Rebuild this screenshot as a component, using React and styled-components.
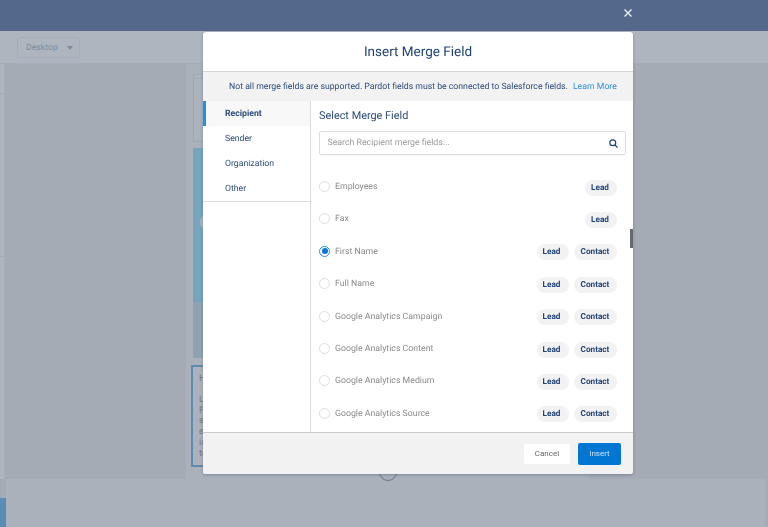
import React from "react";
import styled, { createGlobalStyle } from "styled-components";

const Global = createGlobalStyle`
  html, body { margin: 0; padding: 0; width: 768px; height: 527px; overflow: hidden; background: #a4abb5; }
  * { box-sizing: border-box; }
  body { font-family: Roboto, "Liberation Sans", sans-serif; text-rendering: geometricPrecision; }
`;

const Page = styled.div`
  position: relative;
  width: 768px;
  height: 527px;
  display: flex;
  flex-direction: column;
  overflow: hidden;
  filter: blur(0.45px);
`;
const TopBar = styled.header`
  height: 31px;
  flex: none;
  background: #53688a;
  border-bottom: 1px solid #56698a;
`;
const Toolbar = styled.div`
  height: 33px;
  flex: none;
  background: #aeb5bf;
  border-bottom: 1px solid #a6adb8;
  padding: 6px 0 0 17px;
`;
const DeviceSelect = styled.div`
  width: 63px;
  height: 21px;
  border: 1px solid #a5adb8;
  border-radius: 3px;
  display: flex;
  align-items: center;
  justify-content: space-between;
  padding: 0 6px 0 8px;
  font-size: 8.7px;
  color: #7c8ca1;
`;
const Caret = styled.span`
  width: 0;
  height: 0;
  border-left: 3.5px solid transparent;
  border-right: 3.5px solid transparent;
  border-top: 4px solid #7f8a99;
`;
const Workspace = styled.div`
  height: 415px;
  flex: none;
  display: flex;
`;
const Rail = styled.div`
  width: 5px;
  flex: none;
  background: #aeb5bf;
  border-right: 1px solid #a8afba;
  display: flex;
  flex-direction: column;
  padding-top: 29px;
`;
const RailBlock = styled.div`
  height: 164px;
  border-top: 1px solid #a2a9b4;
  border-bottom: 1px solid #a2a9b4;
`;
const Gutter = styled.div`
  width: ${(p) => p.$w};
  flex: ${(p) => (p.$grow ? 1 : "none")};
  background: #a4abb5;
`;
const CanvasColumn = styled.div`
  width: 403px;
  flex: none;
  background: #aab1bb;
  padding: 10px 0 0 7px;
  position: relative;
`;
const EmailHead = styled.div`
  height: 68px;
  border: 1px solid #a0a7b2;
  background: #acb3bd;
  padding-top: 3px;
`;
const EmailHeadLine = styled.div`
  height: 1px;
  background: #a0a7b2;
`;
const Hero = styled.div`
  position: relative;
  margin-top: 6px;
  height: 154px;
  background: #76a4bc;
`;
const HeroDot = styled.span`
  position: absolute;
  left: 7px;
  top: 64px;
  width: 20px;
  height: 20px;
  border-radius: 50%;
  background: #a9b6c0;
`;
const Band = styled.div`
  height: 56px;
  background: #8ea2b2;
`;
const TextBlock = styled.div`
  margin: 7px 0 0 -2px;
  height: 102px;
  border: 2px solid #5f8bb0;
  background: #abb2bc;
  padding: 7px 0 0 6px;
  font-size: 9px;
  line-height: 10.8px;
  color: #6e7680;
  white-space: nowrap;
  overflow: hidden;
`;
const Gap = styled.div`
  height: 10px;
`;
const AddDot = styled.span`
  position: absolute;
  left: 193px;
  top: 399px;
  width: 18px;
  height: 18px;
  border-radius: 50%;
  border: 1px solid #6f7783;
  background: #aab1bb;
`;
const BottomRow = styled.div`
  flex: 1;
  display: flex;
`;
const BottomEdge = styled.div`
  width: 6px;
  flex: none;
  background: #a4abb5;
  padding-top: 19px;
  display: flex;
`;
const BottomEdgeBlue = styled.div`
  flex: 1;
  background: #5a8db5;
`;
const BottomPanel = styled.div`
  flex: 1;
  background: #a9b1bb;
  margin-right: 3px;
`;

const CloseX = styled.button`
  position: absolute;
  left: 622px;
  top: 7px;
  width: 12px;
  height: 12px;
  padding: 0;
  border: 0;
  background: none;
  color: #eef1f5;
  display: flex;
`;
const Modal = styled.section`
  position: absolute;
  left: 203px;
  top: 32px;
  width: 430px;
  height: 442px;
  background: #fff;
  border-radius: 3px;
  box-shadow: 0 1px 3px rgba(50, 60, 80, 0.35);
  display: flex;
  flex-direction: column;
  overflow: hidden;
  color: #1f4274;
`;
const ModalHeader = styled.h2`
  margin: 0;
  height: 40px;
  flex: none;
  display: flex;
  align-items: center;
  justify-content: center;
  font-size: 13.5px;
  font-weight: 400;
  border-bottom: 1px solid #d3d3d3;
`;
const Notice = styled.div`
  height: 29px;
  flex: none;
  background: #f2f2f2;
  display: flex;
  align-items: center;
  padding-left: 26px;
  font-size: 8.7px;
  color: #2c4c7a;
  white-space: nowrap;
`;
const LearnMore = styled.a`
  margin-left: 5px;
  color: #2d8fdc;
`;
const Body = styled.div`
  flex: 1;
  min-height: 0;
  display: flex;
`;
const Sidebar = styled.nav`
  width: 108px;
  flex: none;
  border-right: 1px solid #dcdcdc;
`;
const SideList = styled.div`
  border-bottom: 1px solid #dcdcdc;
`;
const SideItem = styled.div`
  height: 25px;
  display: flex;
  align-items: center;
  font-size: 8.7px;
  font-weight: ${(p) => (p.$active ? 700 : 400)};
  color: #2c4c7a;
  background: ${(p) => (p.$active ? "#f8f8f8" : "#fff")};
  border-left: 3px solid ${(p) => (p.$active ? "#1e90f5" : "transparent")};
  padding: 1px 0 0 19px;
`;
const Main = styled.div`
  flex: 1;
  min-width: 0;
  position: relative;
  padding: 0 0 0 8px;
  overflow: hidden;
`;
const MainTitle = styled.h3`
  margin: 0;
  height: 30px;
  display: flex;
  align-items: center;
  padding-bottom: 1px;
  font-size: 10.9px;
  font-weight: 400;
  color: #2c4c7a;
`;
const SearchBox = styled.div`
  width: 307px;
  height: 24px;
  border: 1px solid #dddddd;
  border-radius: 2px;
  display: flex;
  align-items: center;
  justify-content: space-between;
  padding: 0 7px 0 7.5px;
  font-size: 8.75px;
  color: #9b9b9b;
  box-shadow: 0 1px 1px rgba(0, 0, 0, 0.04);
`;
const List = styled.div`
  margin-top: 15.4px;
  padding-right: 16px;
`;
const Row = styled.div`
  height: 32.4px;
  display: flex;
  align-items: center;
`;
const Radio = styled.span`
  width: 11px;
  height: 11px;
  flex: none;
  border-radius: 50%;
  border: 1px solid ${(p) => (p.$on ? "#1e90f5" : "#dcdcdc")};
  display: flex;
  align-items: center;
  justify-content: center;
  &::after {
    content: "";
    width: 6px;
    height: 6px;
    border-radius: 50%;
    background: ${(p) => (p.$on ? "#0c74d8" : "transparent")};
  }
`;
const FieldName = styled.span`
  margin-left: 5px;
  flex: 1;
  font-size: 8.75px;
  color: #8a8a8a;
  position: relative;
  top: 0.5px;
`;
const Chip = styled.span`
  height: 16px;
  width: ${(p) => p.$w};
  margin-left: 5.5px;
  border-radius: 8px;
  background: #f2f2f2;
  display: flex;
  align-items: center;
  justify-content: center;
  font-size: 8.2px;
  font-weight: 700;
  color: #1f4274;
  padding-right: ${(p) => p.$pad || "2px"};
  position: relative;
  top: 1px;
`;
const ScrollThumb = styled.span`
  position: absolute;
  right: 0;
  top: 128px;
  width: 3px;
  height: 19px;
  background: #666a70;
`;
const Footer = styled.footer`
  height: 42px;
  flex: none;
  background: #f2f2f2;
  border-top: 1px solid #c9c9c9;
  display: flex;
  align-items: center;
  justify-content: flex-end;
  padding: 0 12px 0 0;
`;
const CancelButton = styled.button`
  width: 46px;
  height: 20px;
  border: 0;
  border-radius: 1px;
  background: #fff;
  color: #666;
  font: 400 8px Roboto, sans-serif;
  padding: 0;
`;
const InsertButton = styled.button`
  margin-left: 8px;
  width: 43px;
  height: 22px;
  border: 0;
  border-radius: 2px;
  background: #0176d3;
  color: #cfe3f5;
  font: 400 8px Roboto, sans-serif;
  padding: 0;
`;

const fields = [
  ["Employees", false],
  ["Fax", false],
  ["First Name", true],
  ["Full Name", true],
  ["Google Analytics Campaign", true],
  ["Google Analytics Content", true],
  ["Google Analytics Medium", true],
  ["Google Analytics Source", true],
];

export default function App() {
  return (
    <Page>
      <Global />
      <TopBar />
      <Toolbar>
        <DeviceSelect>
          Desktop
          <Caret />
        </DeviceSelect>
      </Toolbar>
      <Workspace>
        <Rail>
          <RailBlock />
        </Rail>
        <Gutter $w="181px" />
        <CanvasColumn>
          <EmailHead>
            <EmailHeadLine />
          </EmailHead>
          <Hero>
            <HeroDot />
          </Hero>
          <Band />
          <TextBlock>
            Hi
            <Gap />
            Lorem
            <br />
            Fusce
            <br />
            sed
            <br />
            elit
            <br />
            iam
            <br />
            tem
          </TextBlock>
          <AddDot />
        </CanvasColumn>
        <Gutter $grow />
      </Workspace>
      <BottomRow>
        <BottomEdge>
          <BottomEdgeBlue />
        </BottomEdge>
        <BottomPanel />
      </BottomRow>

      <CloseX aria-label="Close">
        <svg width="12" height="12" viewBox="0 0 12 12" fill="none" stroke="currentColor" strokeWidth="1.3">
          <path d="M2.5 2.5l7 7M9.5 2.5l-7 7" />
        </svg>
      </CloseX>

      <Modal>
        <ModalHeader>Insert Merge Field</ModalHeader>
        <Notice>
          Not all merge fields are supported. Pardot fields must be connected to Salesforce fields.
          <LearnMore>Learn More</LearnMore>
        </Notice>
        <Body>
          <Sidebar>
            <SideList>
              <SideItem $active>Recipient</SideItem>
              <SideItem>Sender</SideItem>
              <SideItem>Organization</SideItem>
              <SideItem>Other</SideItem>
            </SideList>
          </Sidebar>
          <Main>
            <MainTitle>Select Merge Field</MainTitle>
            <SearchBox>
              Search Recipient merge fields...
              <svg width="9" height="9" viewBox="0 0 11 11" fill="none" stroke="#1f4274" strokeWidth="1.5">
                <circle cx="4.6" cy="4.6" r="3.6" />
                <path d="M7.3 7.3l3.2 3.2" />
              </svg>
            </SearchBox>
            <List>
              {fields.map(([name, contact]) => (
                <Row key={name}>
                  <Radio $on={name === "First Name"} />
                  <FieldName>{name}</FieldName>
                  <Chip $w="32px">Lead</Chip>
                  {contact && (
                    <Chip $w="43px" $pad="1px">
                      Contact
                    </Chip>
                  )}
                </Row>
              ))}
            </List>
            <ScrollThumb />
          </Main>
        </Body>
        <Footer>
          <CancelButton>Cancel</CancelButton>
          <InsertButton>Insert</InsertButton>
        </Footer>
      </Modal>
    </Page>
  );
}
